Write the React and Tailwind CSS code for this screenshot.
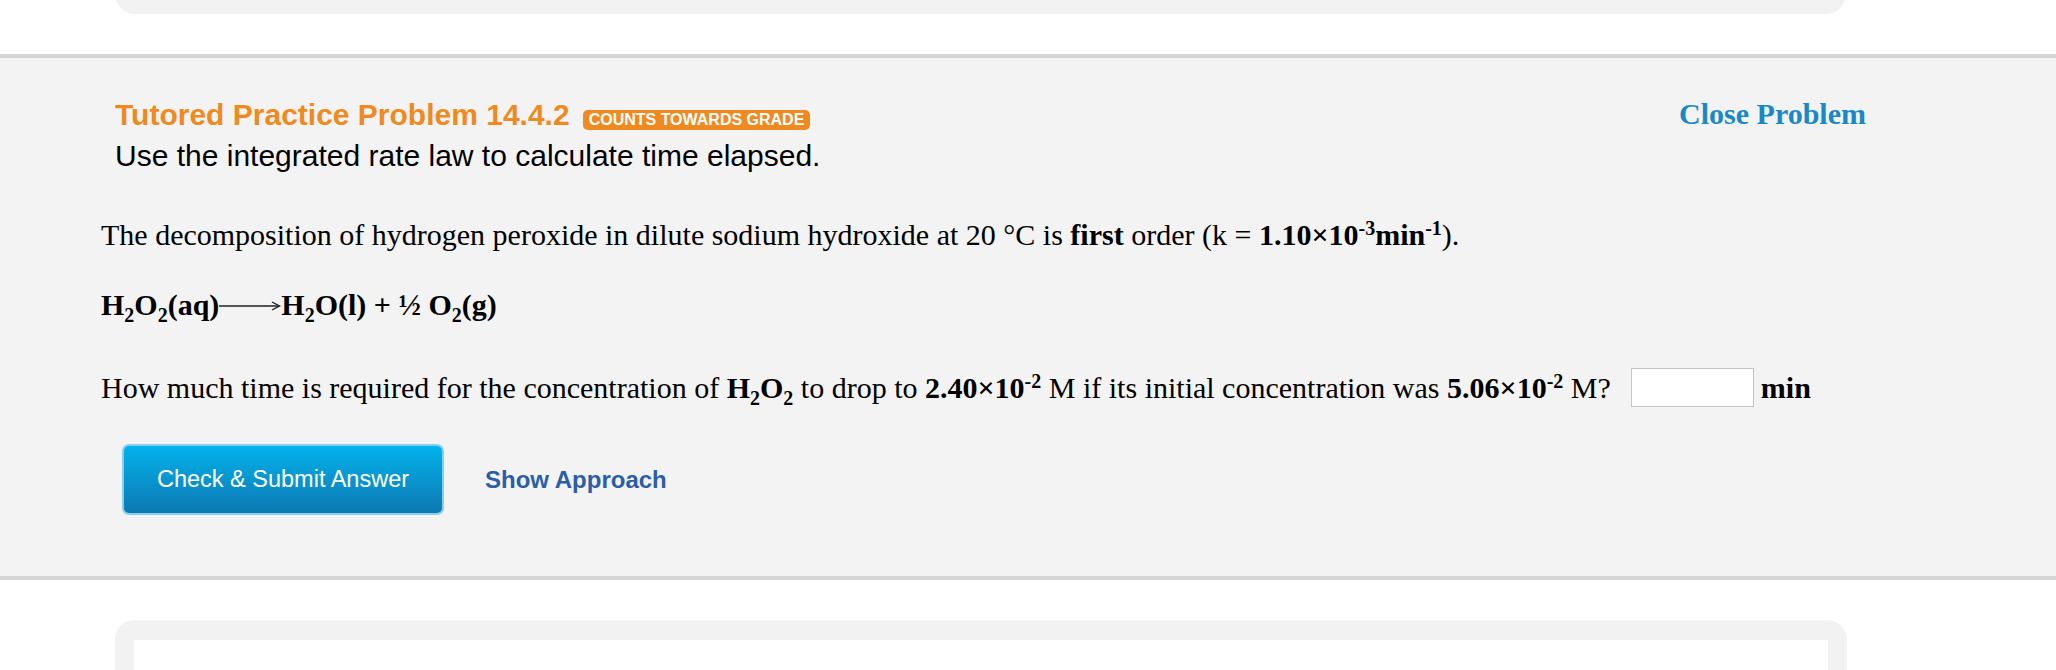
import React from 'react';

const serif = "font-['Liberation_Serif','Times_New_Roman',serif]";
const sans = "font-['Liberation_Sans',Arial,sans-serif]";

const Sub = ({ children }) => (
  <span className="relative top-[7px] text-[20px] leading-none">{children}</span>
);

const Sup = ({ children }) => (
  <span className="relative top-[-10px] text-[20px] leading-none">{children}</span>
);

const Arrow = () => (
  <svg width="62" height="12" viewBox="0 0 62 12" className="inline-block align-[3px]">
    <line x1="0" y1="6" x2="60" y2="6" stroke="#222" strokeWidth="1.4" />
    <path d="M53 2 L60.5 6 L53 10" fill="none" stroke="#222" strokeWidth="1.4" />
  </svg>
);

const ProblemHeader = () => (
  <div className="flex items-start justify-between pl-[115px] pr-[190px]">
    <div className={`${sans} text-[30px] leading-[36px]`}>
      <div>
        <span className="font-bold text-[#ef8a21]">Tutored Practice Problem 14.4.2</span>
        <span className="ml-[13px] inline-block rounded-[5px] bg-[#ef8a21] px-[6px] text-[16px] font-bold leading-[20px] text-white">
          COUNTS TOWARDS GRADE
        </span>
      </div>
      <div className="mt-[5px] text-black">Use the integrated rate law to calculate time elapsed.</div>
    </div>
    <a href="#" className={`${serif} -mt-[1px] text-[30px] font-bold leading-[36px] text-[#1a88c6]`}>
      Close Problem
    </a>
  </div>
);

const ProblemBody = () => (
  <div className={`${serif} pl-[101px] text-[30px] text-black`}>
    <p className="mt-[41px] leading-[40px]">
      The decomposition of hydrogen peroxide in dilute sodium hydroxide at 20 °C is <b>first</b> order (k ={' '}
      <b>
        1.10×10<Sup>-3</Sup>min<Sup>-1</Sup>
      </b>
      ).
    </p>
    <p className="mt-[30px] font-bold leading-[40px]">
      H<Sub>2</Sub>O<Sub>2</Sub>(aq)
      <Arrow />
      H<Sub>2</Sub>O(l) + ½ O<Sub>2</Sub>(g)
    </p>
    <div className="mt-[43px] flex items-start">
      <span className="whitespace-nowrap leading-[40px]">
        How much time is required for the concentration of{' '}
        <b>
          H<Sub>2</Sub>O<Sub>2</Sub>
        </b>{' '}
        to drop to{' '}
        <b>
          2.40×10<Sup>-2</Sup>
        </b>{' '}
        M if its initial concentration was{' '}
        <b>
          5.06×10<Sup>-2</Sup>
        </b>{' '}
        M?
      </span>
      <input
        type="text"
        className="ml-[20px] h-[39px] w-[123px] border border-[#c4c4c4] bg-white outline-none"
      />
      <span className="ml-[7px] font-bold leading-[40px]">min</span>
    </div>
  </div>
);

const ProblemActions = () => (
  <div className={`${sans} mt-[36px] flex items-center pl-[122px]`}>
    <button className="h-[71px] w-[322px] rounded-[7px] border-2 border-[#86d0ef] bg-linear-to-b from-[#02b2ec] to-[#0c79b2] text-[23.5px] text-white">
      Check &amp; Submit Answer
    </button>
    <a href="#" className="ml-[41px] text-[24px] font-bold text-[#2c5ea7]">
      Show Approach
    </a>
  </div>
);

export default function App() {
  return (
    <div className="h-[670px] w-[2056px] overflow-hidden bg-white">
      <div className="-mt-[30px] ml-[115px] h-[44px] w-[1731px] rounded-[20px] bg-[#f2f2f2]" />
      <div className="mt-[40px] h-[4px] bg-[#d4d4d4]" />
      <div className="bg-[#f3f3f3] pt-[39px] pb-[61px]">
        <ProblemHeader />
        <ProblemBody />
        <ProblemActions />
      </div>
      <div className="h-[4px] bg-[#d4d4d4]" />
      <div className="mt-[40px] ml-[115px] w-[1732px] rounded-t-[20px] bg-[#f2f2f2] px-[19px] pt-[20px]">
        <div className="h-[40px] bg-white" />
      </div>
    </div>
  );
}
